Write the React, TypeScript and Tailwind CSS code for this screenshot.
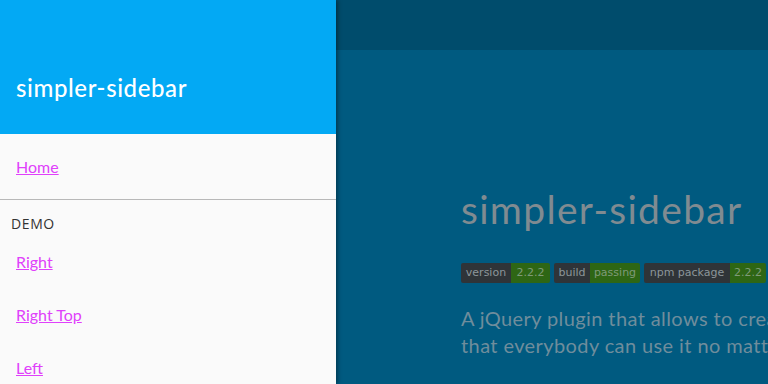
const links = ["Right", "Right Top", "Left"];

const badges = [
  { label: "version", value: "2.2.2", lw: "w-[50px]", vw: "w-[39px]" },
  { label: "build", value: "passing", lw: "w-[36px]", vw: "w-[50px]" },
  { label: "npm package", value: "2.2.2", lw: "w-[86px]", vw: "w-[36px]" },
];

export default function App() {
  return (
    <div className="flex h-[384px] w-[768px] overflow-hidden font-['Lato',sans-serif]">
      {/* Sidebar */}
      <aside className="z-10 flex w-[336px] shrink-0 flex-col overflow-hidden bg-[#fafafa] shadow-[2px_0_4px_rgba(0,0,0,0.35)]">
        <div className="flex h-[134px] shrink-0 items-end bg-[#03a9f4] px-4 pb-[34px]">
          <h1 className="text-[24px] font-medium leading-none tracking-[0.6px] text-white">simpler-sidebar</h1>
        </div>
        <div className="flex h-[65px] shrink-0 items-center px-4">
          <a href="#" className="text-[16px] text-[#e040fb] underline">Home</a>
        </div>
        <div className="shrink-0 border-t border-[#b8b8b8]" />
        <div className="shrink-0 px-[11px] pt-[13px] font-['Open_Sans',sans-serif] text-[14px] tracking-[0.6px] text-[#333]">DEMO</div>
        <nav className="mt-[1px] flex shrink-0 flex-col">
          {links.map((l) => (
            <a key={l} href="#" className="flex h-[53px] shrink-0 items-center px-4 text-[16px] text-[#e040fb] underline">
              {l}
            </a>
          ))}
        </nav>
      </aside>

      {/* Main (behind overlay) */}
      <main className="flex flex-1 flex-col bg-[#005a80]">
        <div className="h-[50px] bg-[#004c6c]" />
        <div className="flex flex-col pl-[125px] pt-[137px]">
          <h2 className="whitespace-nowrap text-[39px] leading-[44px] tracking-[1.3px] text-[#808b91]">simpler-sidebar</h2>
          <div className="mt-[32px] flex gap-[3px] whitespace-nowrap">
            {badges.map((b) => (
              <div key={b.label} className="mr-[1px] flex h-[20px] overflow-hidden rounded-[2px] font-['DejaVu_Sans',sans-serif] text-[11px] leading-[20px] text-[#8c969a]">
                <span className={`${b.lw} bg-[#2f3438] text-center`}>{b.label}</span>
                <span className={`${b.vw} bg-[#2e6614] text-center text-[#7f9a78]`}>{b.value}</span>
              </div>
            ))}
          </div>
          <p className="mt-[22px] whitespace-nowrap text-[20px] leading-[27px] tracking-[0.4px] text-[#6f8d9c]">
            A jQuery plugin that allows to create a sidebar
            <br />
            that everybody can use it no matter what
          </p>
        </div>
      </main>
    </div>
  );
}
